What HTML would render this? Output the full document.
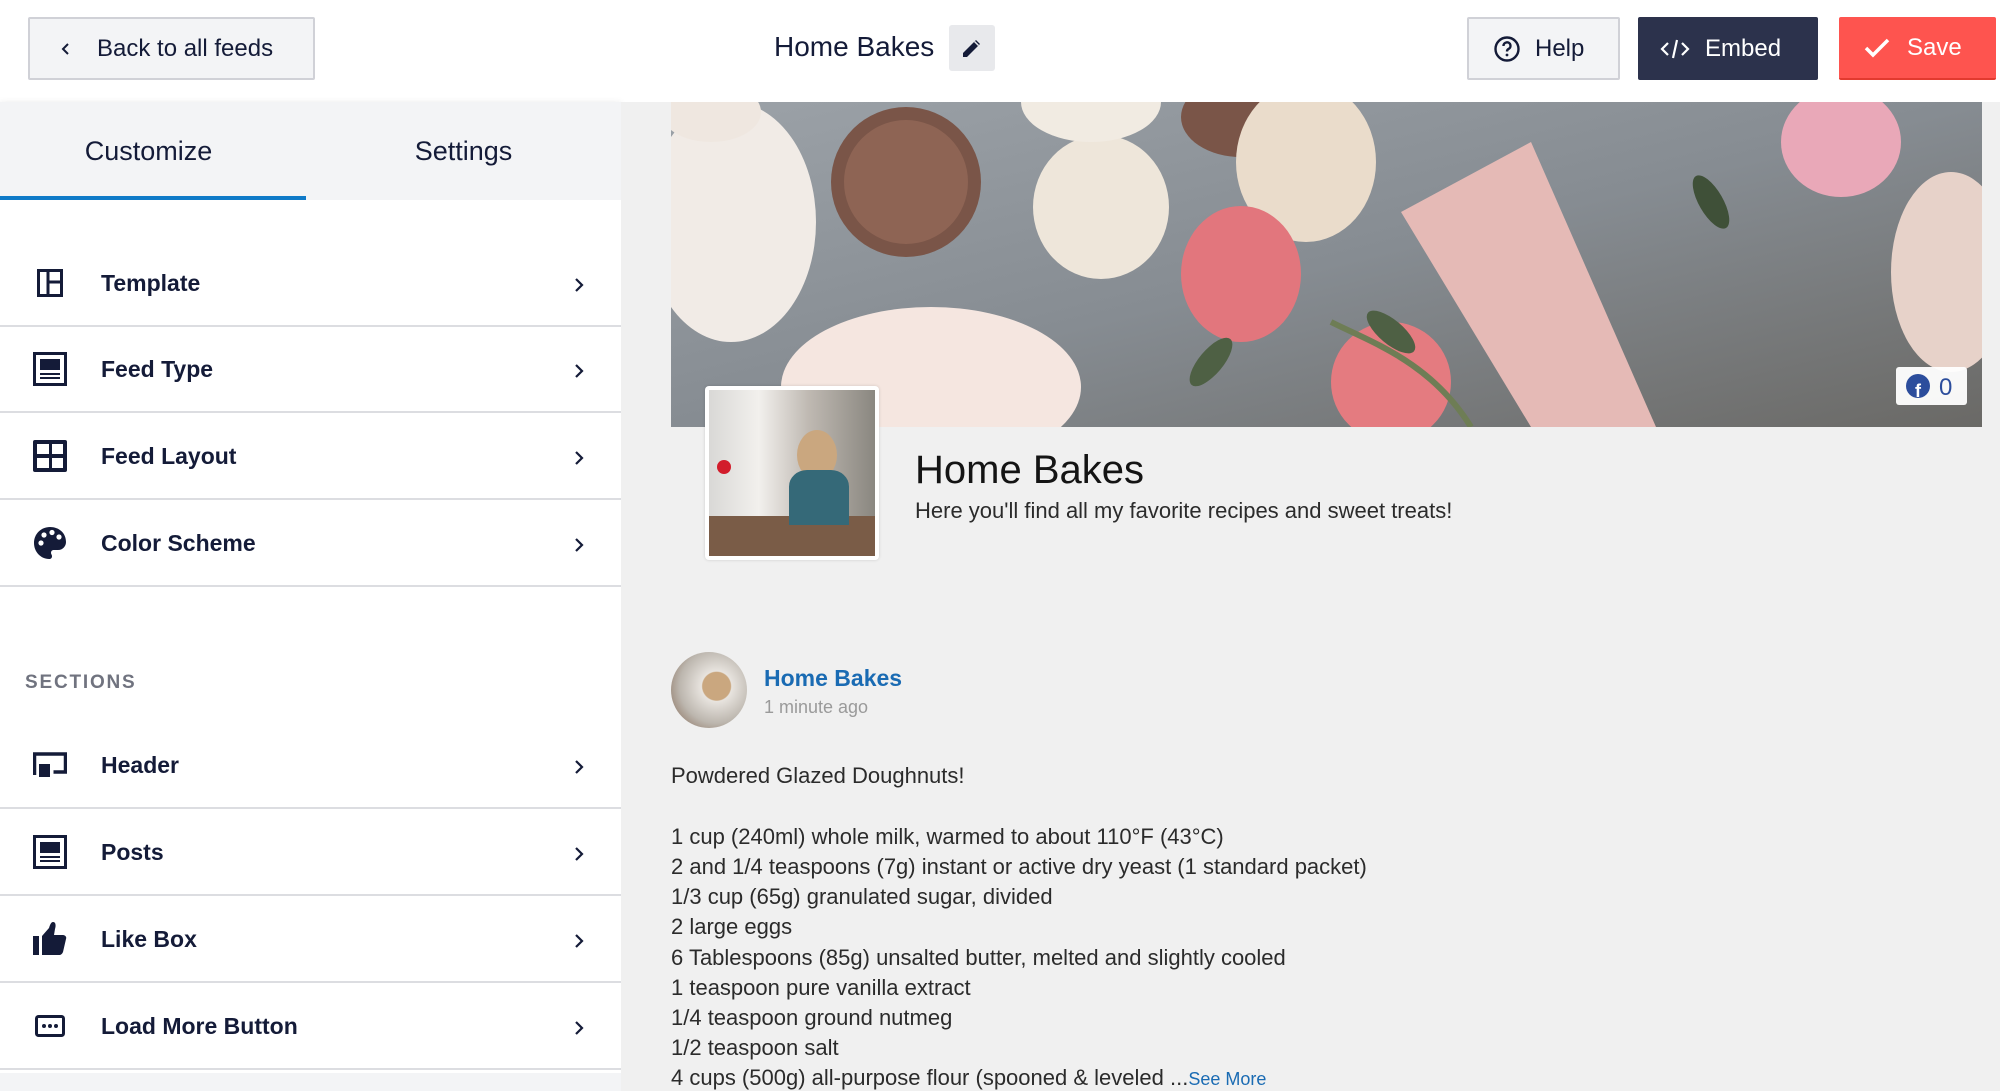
<!DOCTYPE html>
<html><head><meta charset="utf-8"><style>
*{margin:0;padding:0;box-sizing:border-box}
body{width:2000px;height:1091px;overflow:hidden;background:#fff;font-family:"Liberation Sans",Arial,sans-serif;color:#141b38;position:relative}
.abs{position:absolute}
.btn{position:absolute;top:17px;height:63px;display:flex;align-items:center;font-size:24px;border-radius:2px}
.tab{position:absolute;top:102px;height:98px;display:flex;align-items:center;justify-content:center;font-size:27px}
.item{position:absolute;left:0;width:621px;height:86px;border-bottom:2px solid #dcdde1;display:flex;align-items:center;font-size:23px;font-weight:600}
.item .ic{position:absolute;left:32px;width:36px;height:36px;display:flex;align-items:center;justify-content:center}
.item .tx{position:absolute;left:101px}
.item .ch{position:absolute;left:573px;top:36px}
.pt{position:absolute;left:671px;font-size:22px;color:#2b2b2b;white-space:nowrap}
</style></head><body>
<div class="btn" style="left:28px;width:287px;background:#f3f4f6;border:2px solid #d0d1d7"><svg class="abs" style="left:30px" width="12" height="16" viewBox="0 0 12 16"><path d="M8 3L3 8l5 5" fill="none" stroke="#141b38" stroke-width="2"/></svg><span style="position:absolute;left:67px">Back to all feeds</span></div>
<div class="abs" style="left:774px;top:31px;font-size:28px">Home Bakes</div>
<div class="abs" style="left:949px;top:25px;width:46px;height:46px;background:#e8e9ec;border-radius:3px;display:flex;align-items:center;justify-content:center">
<svg width="24" height="24" viewBox="0 0 24 24"><path d="M3 21v-4L16 4l4 4L7 21z" fill="#141b38"/><path d="M14.5 5.5l4 4" stroke="#e8e9ec" stroke-width="1.5"/></svg></div>
<div class="btn" style="left:1467px;width:153px;background:#f3f4f6;border:2px solid #d0d1d7">
<svg class="abs" style="left:24px" width="28" height="28" viewBox="0 0 28 28"><circle cx="14" cy="14" r="11.5" fill="none" stroke="#141b38" stroke-width="2.4"/><path d="M10.5 11a3.5 3.5 0 1 1 5 3c-1.2.6-1.5 1.3-1.5 2.5" fill="none" stroke="#141b38" stroke-width="2.4"/><circle cx="14" cy="20" r="1.4" fill="#141b38"/></svg>
<span class="abs" style="left:66px">Help</span></div>
<div class="btn" style="left:1638px;width:180px;background:#2c324c;color:#fff">
<svg class="abs" style="left:22px" width="30" height="26" viewBox="0 0 30 26"><path d="M8 7l-6 6 6 6M22 7l6 6-6 6M17 4l-4 18" fill="none" stroke="#fff" stroke-width="2.2"/></svg>
<span class="abs" style="left:67px">Embed</span></div>
<div class="btn" style="left:1839px;width:157px;background:#fe544f;color:#fff;border-bottom:2px solid #e23a2f">
<svg class="abs" style="left:24px" width="28" height="24" viewBox="0 0 28 24"><path d="M3 12l7 7L25 4" fill="none" stroke="#fff" stroke-width="3.5"/></svg>
<span class="abs" style="left:68px">Save</span></div>

<div class="abs" style="left:0;top:102px;width:621px;height:989px;background:#fff;box-shadow:0 0 6px rgba(0,0,0,.08)"></div>
<div class="abs" style="left:0;top:102px;width:621px;height:98px;background:#f3f4f6"></div>
<div class="tab" style="left:0;width:297px">Customize</div>
<div class="tab" style="left:306px;width:315px">Settings</div>
<div class="abs" style="left:0;top:196px;width:306px;height:4px;background:#0f7ac8"></div>

<div class="item" style="top:241px"><div class="ic"><svg width="26" height="28" viewBox="0 0 26 28"><rect x="1.5" y="1.5" width="23" height="25" fill="none" stroke="#141b38" stroke-width="3"/><path d="M11 1.5v25M11 13h13" stroke="#141b38" stroke-width="3"/></svg></div><span class="tx">Template</span><svg class="ch" width="12" height="16" viewBox="0 0 12 16"><path d="M3 2l6 6-6 6" fill="none" stroke="#141b38" stroke-width="2.2"/></svg></div>
<div class="item" style="top:327px"><div class="ic"><svg width="34" height="34" viewBox="0 0 34 34"><rect x="1.5" y="1.5" width="31" height="31" fill="none" stroke="#141b38" stroke-width="3"/><rect x="7" y="7" width="20" height="11" fill="#141b38"/><path d="M7 22h20M7 26h20" stroke="#141b38" stroke-width="2"/></svg></div><span class="tx">Feed Type</span><svg class="ch" width="12" height="16" viewBox="0 0 12 16"><path d="M3 2l6 6-6 6" fill="none" stroke="#141b38" stroke-width="2.2"/></svg></div>
<div class="item" style="top:414px"><div class="ic"><svg width="34" height="32" viewBox="0 0 34 32"><rect x="0" y="0" width="34" height="32" rx="2" fill="#141b38"/><rect x="4" y="4" width="12" height="10" fill="#fff"/><rect x="19" y="4" width="11" height="10" fill="#fff"/><rect x="4" y="18" width="12" height="10" fill="#fff"/><rect x="19" y="18" width="11" height="10" fill="#fff"/></svg></div><span class="tx">Feed Layout</span><svg class="ch" width="12" height="16" viewBox="0 0 12 16"><path d="M3 2l6 6-6 6" fill="none" stroke="#141b38" stroke-width="2.2"/></svg></div>
<div class="item" style="top:501px"><div class="ic"><svg width="34" height="34" viewBox="0 0 34 34"><path d="M17 1C8 1 1 8 1 17s7 16 15 16c2 0 3-1 3-3 0-1-1-2-1-3 0-2 1-3 3-3h4c5 0 8-4 8-8C33 7 26 1 17 1z" fill="#141b38"/><circle cx="8" cy="17" r="2.6" fill="#fff"/><circle cx="11" cy="9" r="2.6" fill="#fff"/><circle cx="19" cy="6.5" r="2.6" fill="#fff"/><circle cx="26" cy="11" r="2.6" fill="#fff"/></svg></div><span class="tx">Color Scheme</span><svg class="ch" width="12" height="16" viewBox="0 0 12 16"><path d="M3 2l6 6-6 6" fill="none" stroke="#141b38" stroke-width="2.2"/></svg></div>

<div class="abs" style="left:25px;top:672px;font-size:19px;font-weight:600;letter-spacing:1.8px;color:#70737f">SECTIONS</div>

<div class="item" style="top:723px"><div class="ic"><svg width="34" height="28" viewBox="0 0 34 28"><path d="M1.5 24V3h31v18h-12" fill="none" stroke="#141b38" stroke-width="3.5"/><rect x="6" y="13" width="11" height="13" fill="#141b38"/></svg></div><span class="tx">Header</span><svg class="ch" width="12" height="16" viewBox="0 0 12 16"><path d="M3 2l6 6-6 6" fill="none" stroke="#141b38" stroke-width="2.2"/></svg></div>
<div class="item" style="top:810px"><div class="ic"><svg width="34" height="34" viewBox="0 0 34 34"><rect x="1.5" y="1.5" width="31" height="31" fill="none" stroke="#141b38" stroke-width="3"/><rect x="7" y="7" width="20" height="11" fill="#141b38"/><path d="M7 22h20M7 26h20" stroke="#141b38" stroke-width="2"/></svg></div><span class="tx">Posts</span><svg class="ch" width="12" height="16" viewBox="0 0 12 16"><path d="M3 2l6 6-6 6" fill="none" stroke="#141b38" stroke-width="2.2"/></svg></div>
<div class="item" style="top:897px"><div class="ic"><svg width="34" height="34" viewBox="0 0 34 34"><rect x="0" y="14" width="6" height="19" fill="#141b38"/><path d="M9 14l7-8c1-3 2-6 4-6 3 0 3 4 2 7l-1 6h9c2 0 4 2 3 4l-3 13c-1 2-2 3-4 3H9z" fill="#141b38"/></svg></div><span class="tx">Like Box</span><svg class="ch" width="12" height="16" viewBox="0 0 12 16"><path d="M3 2l6 6-6 6" fill="none" stroke="#141b38" stroke-width="2.2"/></svg></div>
<div class="item" style="top:984px"><div class="ic"><svg width="30" height="22" viewBox="0 0 30 22"><rect x="1.5" y="1.5" width="27" height="19" rx="2" fill="none" stroke="#141b38" stroke-width="3"/><circle cx="9" cy="11" r="2" fill="#141b38"/><circle cx="15" cy="11" r="2" fill="#141b38"/><circle cx="21" cy="11" r="2" fill="#141b38"/></svg></div><span class="tx">Load More Button</span><svg class="ch" width="12" height="16" viewBox="0 0 12 16"><path d="M3 2l6 6-6 6" fill="none" stroke="#141b38" stroke-width="2.2"/></svg></div>
<div class="abs" style="left:0;top:1073px;width:621px;height:18px;background:#f3f4f6"></div>

<div class="abs" style="left:621px;top:102px;width:1379px;height:989px;background:#f0f0f0"></div>
<svg class="abs" style="left:671px;top:102px" width="1311" height="325" viewBox="0 0 1311 325">
<defs><linearGradient id="g" x1="0" y1="0" x2="1" y2="1"><stop offset="0" stop-color="#9ca2a8"/><stop offset=".5" stop-color="#868c92"/><stop offset="1" stop-color="#6a6966"/></linearGradient></defs>
<rect width="1311" height="325" fill="url(#g)"/>
<ellipse cx="60" cy="120" rx="85" ry="120" fill="#f1ebe6"/>
<ellipse cx="40" cy="10" rx="50" ry="30" fill="#efe7e0"/>
<circle cx="235" cy="80" r="75" fill="#7a5548"/><circle cx="235" cy="80" r="62" fill="#8e6454"/>
<ellipse cx="430" cy="105" rx="68" ry="72" fill="#eee6da"/>
<ellipse cx="420" cy="0" rx="70" ry="40" fill="#f1ebe2"/>
<ellipse cx="570" cy="15" rx="60" ry="40" fill="#7a5548"/>
<ellipse cx="635" cy="60" rx="70" ry="80" fill="#eadccb"/>
<ellipse cx="570" cy="172" rx="60" ry="68" fill="#e2767d"/>
<ellipse cx="720" cy="280" rx="60" ry="60" fill="#e47b80"/>
<ellipse cx="260" cy="285" rx="150" ry="80" fill="#f5e6e0"/>
<path d="M730 110 L860 40 L985 325 L860 325 Z" fill="#e5bab6"/>
<ellipse cx="1170" cy="40" rx="60" ry="55" fill="#e9a8b8"/>
<ellipse cx="1280" cy="170" rx="60" ry="100" fill="#e7d2c9"/>
<path d="M660 220 C700 240 760 260 800 325" stroke="#6e7d55" stroke-width="6" fill="none"/>
<ellipse cx="720" cy="230" rx="30" ry="12" fill="#4e6044" transform="rotate(40 720 230)"/>
<ellipse cx="540" cy="260" rx="30" ry="12" fill="#4e6044" transform="rotate(-50 540 260)"/>
<ellipse cx="1040" cy="100" rx="30" ry="12" fill="#3f5038" transform="rotate(60 1040 100)"/>
<rect x="1225" y="265" width="71" height="38" rx="3" fill="#fff" opacity=".95"/>
<circle cx="1247" cy="284" r="12" fill="#2c4d9c"/><text x="1244" y="295" font-size="18" font-weight="700" fill="#fff" font-family="Liberation Sans">f</text>
<text x="1268" y="293" font-size="24" fill="#2c4d9c" font-family="Liberation Sans">0</text>
</svg>
<div class="abs" style="left:705px;top:386px;width:174px;height:174px;background:#fff;border-radius:4px;padding:4px;box-shadow:0 0 3px rgba(0,0,0,.15)">
<div style="width:100%;height:100%;background:linear-gradient(90deg,#d9d8d6 0%,#f2f0ed 30%,#bfb9b2 60%,#8a8780 100%);position:relative;overflow:hidden">
<div class="abs" style="left:0;bottom:0;width:100%;height:40px;background:#7a5c47"></div>
<div class="abs" style="left:88px;top:40px;width:40px;height:50px;background:#caa77f;border-radius:50%"></div>
<div class="abs" style="left:80px;top:80px;width:60px;height:55px;background:#356978;border-radius:30% 30% 0 0"></div>
<div class="abs" style="left:8px;top:70px;width:14px;height:14px;background:#d21c2b;border-radius:50%"></div>
</div></div>
<div class="abs" style="left:915px;top:448px;font-size:40px;color:#141414">Home Bakes</div>
<div class="abs" style="left:915px;top:498px;font-size:22px;color:#2b2b2b">Here you'll find all my favorite recipes and sweet treats!</div>

<div class="abs" style="left:671px;top:652px;width:76px;height:76px;border-radius:50%;background:radial-gradient(circle at 60% 45%,#caa77f 0 14px,#e8e4df 15px,#bcb6ae 60%,#7a5c47 100%)"></div>
<div class="abs" style="left:764px;top:665px;font-size:23px;font-weight:700;color:#1a6bb3">Home Bakes</div>
<div class="abs" style="left:764px;top:697px;font-size:18px;color:#9a9a9a">1 minute ago</div>

<div class="pt" style="top:763px">Powdered Glazed Doughnuts!</div>
<div class="pt" style="top:824px">1 cup (240ml) whole milk, warmed to about 110°F (43°C)</div>
<div class="pt" style="top:854px">2 and 1/4 teaspoons (7g) instant or active dry yeast (1 standard packet)</div>
<div class="pt" style="top:884px">1/3 cup (65g) granulated sugar, divided</div>
<div class="pt" style="top:914px">2 large eggs</div>
<div class="pt" style="top:945px">6 Tablespoons (85g) unsalted butter, melted and slightly cooled</div>
<div class="pt" style="top:975px">1 teaspoon pure vanilla extract</div>
<div class="pt" style="top:1005px">1/4 teaspoon ground nutmeg</div>
<div class="pt" style="top:1035px">1/2 teaspoon salt</div>
<div class="pt" style="top:1065px">4 cups (500g) all-purpose flour (spooned &amp; leveled ...<span style="color:#1a6bb3;font-size:18px">See More</span></div>
</body></html>
